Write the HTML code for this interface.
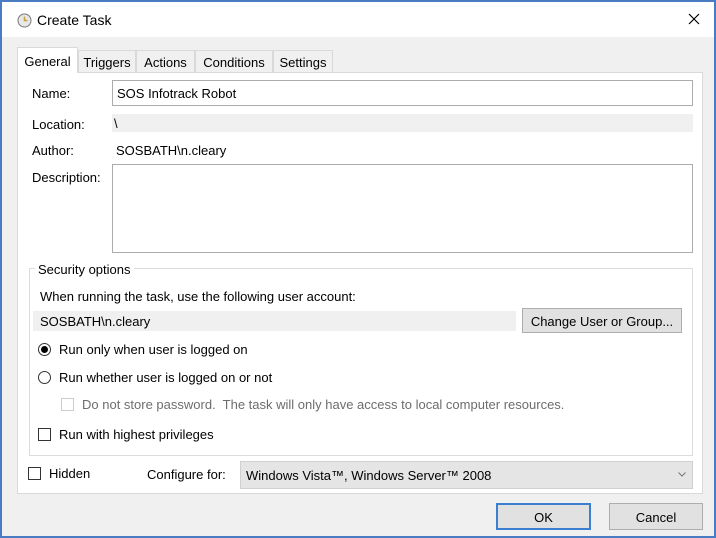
<!DOCTYPE html>
<html><head><style>
*{box-sizing:border-box;margin:0;padding:0}
body{width:716px;height:538px;background:#fff;font-family:"Liberation Sans",sans-serif;font-size:13px;color:#000;position:relative;overflow:hidden}
.a{position:absolute;white-space:nowrap}
#win{position:absolute;left:0;top:0;width:716px;height:538px;border:2px solid #4a7cc4;background:#f0f0f0}
#title{position:absolute;left:2px;top:2px;width:712px;height:35px;background:#fff}
.tab{position:absolute;top:50px;height:22px;background:#f0f0f0;border:1px solid #d9d9d9;border-bottom:none;padding:4px 0 0 0;text-align:center}
#panel{position:absolute;left:17px;top:72px;width:686px;height:422px;background:#fff;border:1px solid #d9d9d9}
.inp{position:absolute;background:#fff;border:1px solid #acacac}
.gray{position:absolute;background:#f0f0f0}
.cb{position:absolute;width:13px;height:13px;border:1px solid #333;background:#fff}
.rb{position:absolute;width:13px;height:13px;border:1px solid #333;border-radius:50%;background:#fff}
.btn{position:absolute;background:#e1e1e1;border:1px solid #adadad;text-align:center}
</style></head><body>
<div id="win"></div>
<div id="title"></div>
<svg class="a" style="left:17px;top:13px" width="15" height="15" viewBox="0 0 15 15"><circle cx="7.5" cy="7.5" r="6.5" fill="#e8e8e8" stroke="#7a7a7a"/><path d="M7.5 3.5V7.5H10.5" stroke="#c8a040" stroke-width="1.5" fill="none"/></svg>
<div class="a" style="left:37px;top:12px;font-size:14px">Create Task</div>
<svg class="a" style="left:688px;top:13px" width="12" height="12" viewBox="0 0 12 12"><path d="M1 1L11 11M11 1L1 11" stroke="#000" stroke-width="1.2"/></svg>
<div id="panel"></div>
<div class="tab" style="left:17px;top:47px;width:61px;height:26px;background:#fff;z-index:2;padding-top:6px">General</div>
<div class="tab" style="left:78px;width:58px">Triggers</div>
<div class="tab" style="left:136px;width:59px">Actions</div>
<div class="tab" style="left:195px;width:78px">Conditions</div>
<div class="tab" style="left:273px;width:60px">Settings</div>
<div class="a" style="left:32px;top:86px">Name:</div>
<div class="inp" style="left:112px;top:80px;width:581px;height:26px"></div>
<div class="a" style="left:117px;top:86px">SOS Infotrack Robot</div>
<div class="a" style="left:32px;top:117px">Location:</div>
<div class="gray" style="left:112px;top:114px;width:581px;height:18px"></div>
<div class="a" style="left:114px;top:116px">\</div>
<div class="a" style="left:32px;top:143px">Author:</div>
<div class="a" style="left:116px;top:143px">SOSBATH\n.cleary</div>
<div class="a" style="left:32px;top:170px">Description:</div>
<div class="inp" style="left:112px;top:164px;width:581px;height:89px"></div>
<div class="a" style="left:29px;top:268px;width:664px;height:188px;border:1px solid #dcdcdc"></div>
<div class="a" style="left:35px;top:262px;background:#fff;padding:0 3px">Security options</div>
<div class="a" style="left:40px;top:289px">When running the task, use the following user account:</div>
<div class="gray" style="left:33px;top:311px;width:483px;height:20px"></div>
<div class="a" style="left:40px;top:314px">SOSBATH\n.cleary</div>
<div class="btn" style="left:522px;top:308px;width:160px;height:25px;padding-top:5px">Change User or Group...</div>
<div class="rb" style="left:38px;top:343px"></div><div class="a" style="left:41px;top:346px;width:7px;height:7px;border-radius:50%;background:#000"></div>
<div class="a" style="left:59px;top:342px">Run only when user is logged on</div>
<div class="rb" style="left:38px;top:371px"></div>
<div class="a" style="left:59px;top:370px">Run whether user is logged on or not</div>
<div class="cb" style="left:61px;top:398px;border-color:#ccc"></div>
<div class="a" style="left:82px;top:397px;color:#6d6d6d">Do not store password.&nbsp; The task will only have access to local computer resources.</div>
<div class="cb" style="left:38px;top:428px"></div>
<div class="a" style="left:59px;top:427px">Run with highest privileges</div>
<div class="cb" style="left:28px;top:467px"></div>
<div class="a" style="left:49px;top:466px">Hidden</div>
<div class="a" style="left:147px;top:467px">Configure for:</div>
<div class="a" style="left:240px;top:461px;width:453px;height:28px;background:#e5e5e5;border:1px solid #d0d0d0"></div>
<div class="a" style="left:246px;top:468px">Windows Vista™, Windows Server™ 2008</div>
<svg class="a" style="left:678px;top:472px" width="8" height="5" viewBox="0 0 8 5"><path d="M0.5 0.5L4 4L7.5 0.5" stroke="#777" fill="none"/></svg>
<div class="btn" style="left:496px;top:503px;width:95px;height:27px;border:2px solid #3c7fd1;padding-top:5px">OK</div>
<div class="btn" style="left:609px;top:503px;width:94px;height:27px;padding-top:6px">Cancel</div>
</body></html>
